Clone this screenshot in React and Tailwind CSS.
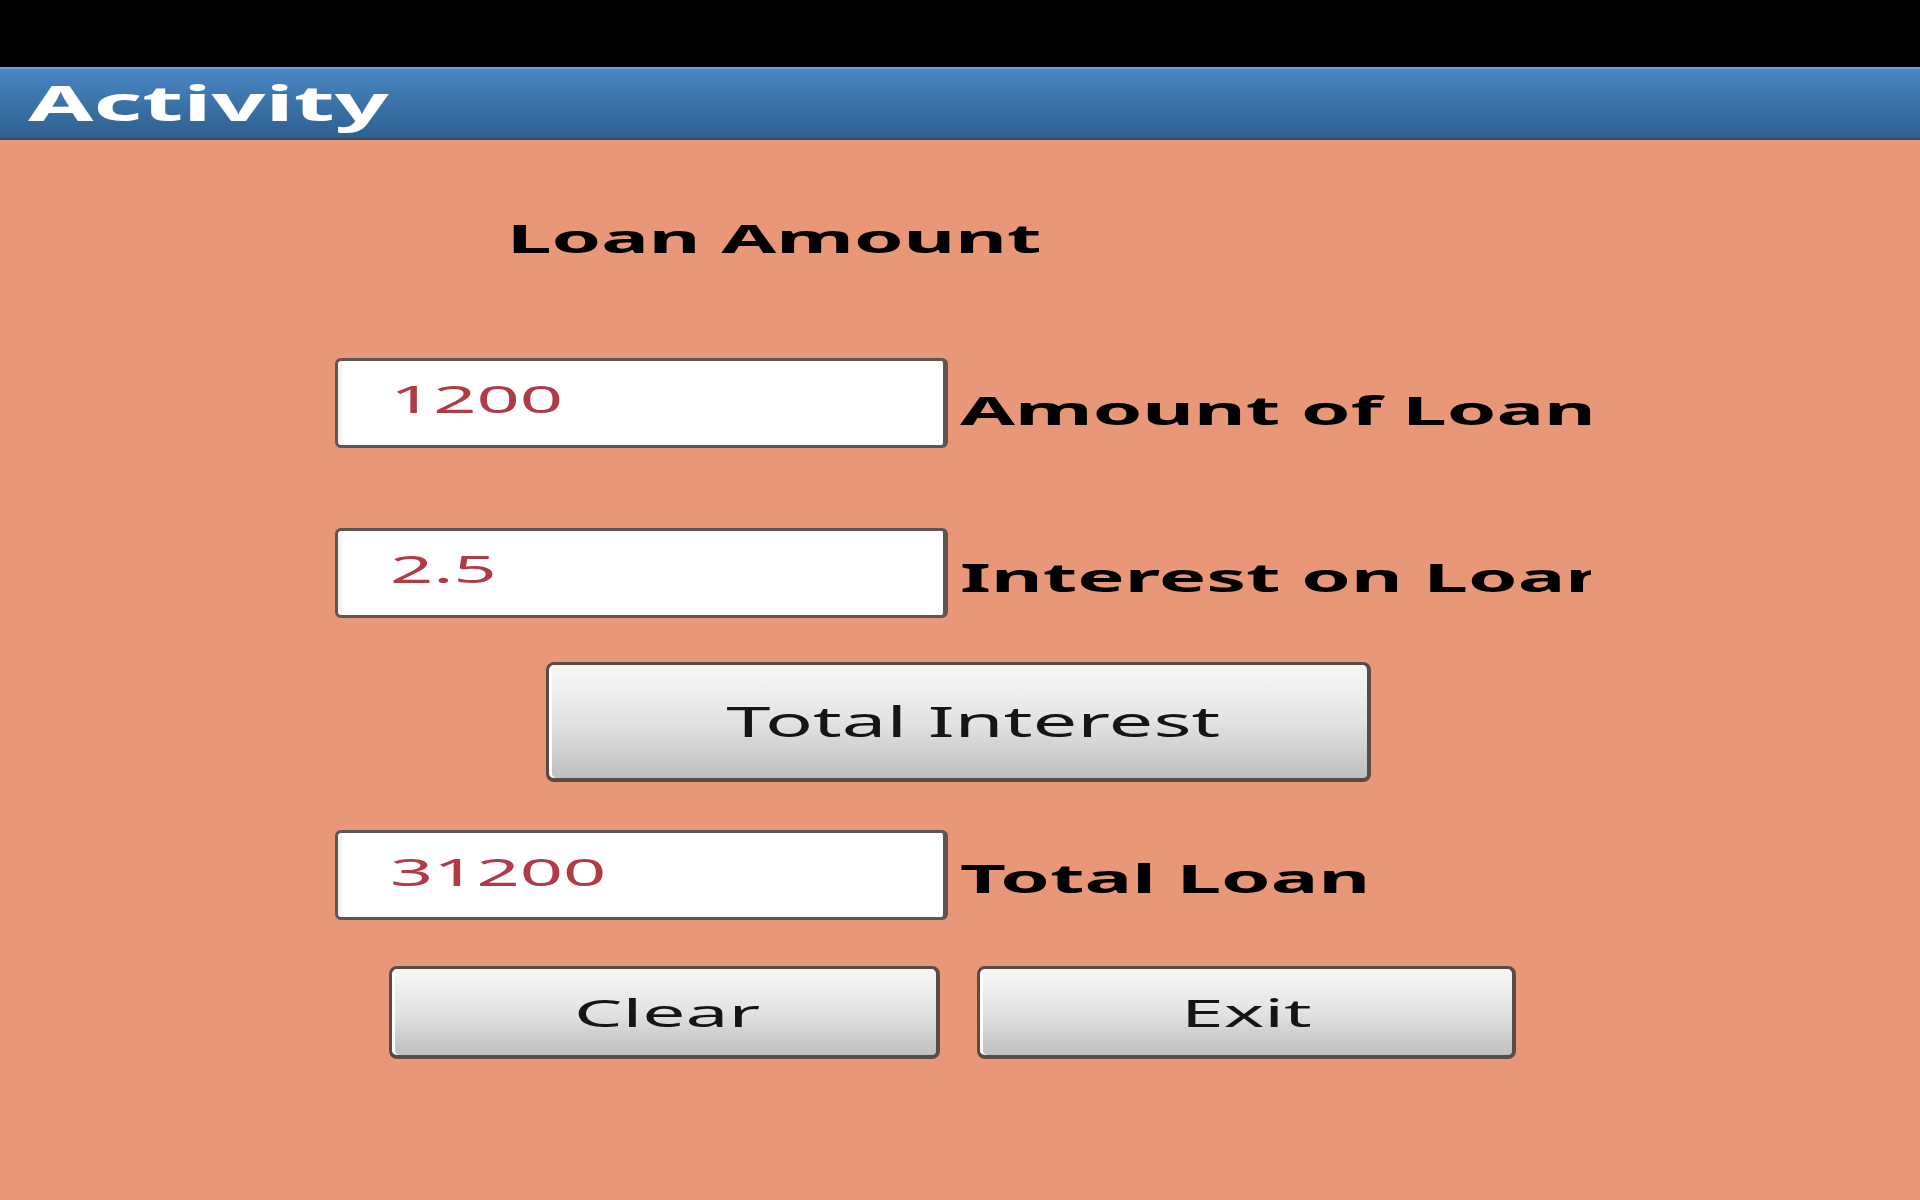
const FONT = { fontFamily: '"Noto Sans", "DejaVu Sans", sans-serif' };

function Wide({ children, className = "", center = false, stretch = "scale-x-[1.94]" }) {
  return (
    <span
      className={`inline-block whitespace-nowrap leading-none ${stretch} ${
        center ? "origin-center" : "origin-left"
      } ${className}`}
    >
      {children}
    </span>
  );
}

function Field({ value, textTop, labelTop, label, clip = false }) {
  return (
    <div className="flex items-start">
      <div className="ml-[335px] h-[90px] w-[613px] rounded-[6px] border-[3px] border-r-[5px] border-[#5d5653] bg-white shadow-[inset_4px_0_0_#f2f3f3]">
        <div className="pl-[52px]" style={{ paddingTop: textTop }}>
          <Wide className="text-[39px] text-[#b13a47]">{value}</Wide>
        </div>
      </div>
      <div
        className={`ml-[12px] w-[631px] ${clip ? "overflow-hidden" : ""}`}
        style={{ paddingTop: labelTop }}
      >
        <Wide stretch="scale-x-[2.04]" className="text-[39px] font-bold text-black">
          {label}
        </Wide>
      </div>
    </div>
  );
}

function GrayButton({ children, className = "", textClass = "text-[38px] scale-x-[2.02]" }) {
  return (
    <div
      className={`flex items-center justify-center rounded-[8px] border-[3px] border-r-[4px] border-b-[4px] border-[#5a4b46] bg-linear-to-b from-[#f6f8f8] via-[#e2e3e3] to-[#bdbfc0] shadow-[inset_3px_0_0_#ffffff] ${className}`}
    >
      <span
        className={`inline-block origin-center whitespace-nowrap leading-none text-[#151515] ${textClass}`}
      >
        {children}
      </span>
    </div>
  );
}

export default function App() {
  return (
    <div className="flex h-[1200px] w-[1920px] flex-col overflow-hidden bg-[#e89779]" style={FONT}>
      <div className="h-[67px] bg-black" />
      <div className="flex h-[73px] items-start border-t-2 border-b-2 border-t-[#6c9cd9] border-b-[#3b4d5f] bg-linear-to-b from-[#4a86c4] to-[#2c608f]">
        <div className="pl-[28px] pt-[10px]">
          <Wide stretch="scale-x-[1.97]" className="text-[48px] font-bold text-white">
            Activity
          </Wide>
        </div>
      </div>

      <div className="flex flex-col">
        <div className="pl-[507px] pt-[78px]">
          <Wide stretch="scale-x-[2.04]" className="text-[39px] font-bold text-black">
            Loan Amount
          </Wide>
        </div>

        <div className="mt-[99px]">
          <Field value="1200" textTop={17} labelTop={32} label="Amount of Loan" />
        </div>
        <div className="mt-[80px]">
          <Field value="2.5" textTop={17} labelTop={29} label="Interest on Loan" clip />
        </div>

        <GrayButton
          className="ml-[546px] mt-[44px] h-[120px] w-[825px] pl-[30px]"
          textClass="text-[41px] scale-x-[1.94]"
        >
          Total Interest
        </GrayButton>

        <div className="mt-[48px]">
          <Field value="31200" textTop={18} labelTop={28} label="Total Loan" />
        </div>

        <div className="ml-[389px] mt-[46px] flex gap-[37px]">
          <GrayButton className="h-[93px] w-[551px] pl-[6px]">Clear</GrayButton>
          <GrayButton className="h-[93px] w-[539px]">Exit</GrayButton>
        </div>
      </div>
    </div>
  );
}
